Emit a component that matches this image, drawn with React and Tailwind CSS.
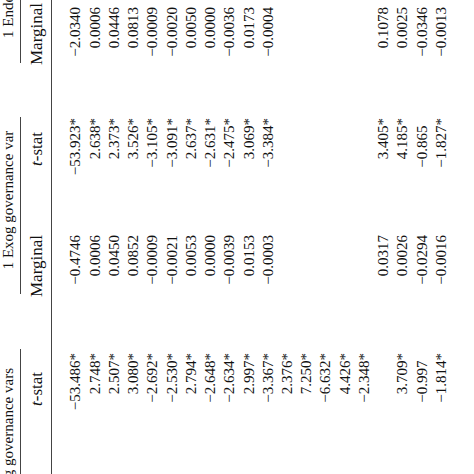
import React from "react";

const rows = [
  ["−53.486*", "−0.4746", "−53.923*", "−2.0340"],
  ["2.748*", "0.0006", "2.638*", "0.0006"],
  ["2.507*", "0.0450", "2.373*", "0.0446"],
  ["3.080*", "0.0852", "3.526*", "0.0813"],
  ["−2.692*", "−0.0009", "−3.105*", "−0.0009"],
  ["−2.530*", "−0.0021", "−3.091*", "−0.0020"],
  ["2.794*", "0.0053", "2.637*", "0.0050"],
  ["−2.648*", "0.0000", "−2.631*", "0.0000"],
  ["−2.634*", "−0.0039", "−2.475*", "−0.0036"],
  ["2.997*", "0.0153", "3.069*", "0.0173"],
  ["−3.367*", "−0.0003", "−3.384*", "−0.0004"],
  ["2.376*", "", "", ""],
  ["7.250*", "", "", ""],
  ["−6.632*", "", "", ""],
  ["4.426*", "", "", ""],
  ["−2.348*", "", "", ""],
  ["", "0.0317", "3.405*", "0.1078"],
  ["3.709*", "0.0026", "4.185*", "0.0025"],
  ["−0.997", "−0.0294", "−0.865", "−0.0346"],
  ["−1.814*", "−0.0016", "−1.827*", "−0.0013"],
];

function Stat({ v }) {
  if (!v) return null;
  const star = v.endsWith("*");
  const num = star ? v.slice(0, -1) : v;
  return (
    <span className="whitespace-nowrap">
      {num}
      <span className={star ? "inline-block w-[7.5px]" : "inline-block w-[7.5px] invisible"}>*</span>
    </span>
  );
}

export default function App() {
  return (
    <div className="w-[474px] h-[474px] overflow-hidden bg-white">
      <div className="w-[474px] h-[474px] -rotate-90 bg-white text-[#111] font-['Liberation_Serif',serif]">
        {/* group headers */}
        <div className="flex h-[16px] leading-[16px] text-[15px] whitespace-nowrap">
          <div className="w-[106px] flex justify-end">
            <span>All exog governance vars</span>
          </div>
          <div className="w-[84px]" />
          <div className="w-[168px] flex justify-center">
            <span>1 Exog governance var</span>
          </div>
          <div className="w-[78px]" />
          <div className="w-[38px] overflow-visible">
            <span>1 Endog governance var</span>
          </div>
        </div>
        <div className="h-[4px]" />
        {/* group rules */}
        <div className="flex h-px">
          <div className="w-[125px] bg-[#444]" />
          <div className="w-[55px]" />
          <div className="w-[177px] bg-[#444]" />
          <div className="w-[54px]" />
          <div className="w-[63px] bg-[#444]" />
        </div>
        <div className="h-[6px]" />
        {/* sub headers */}
        <div className="flex h-[20px] leading-[20px] text-[17px] whitespace-nowrap">
          <div className="w-[57px]" />
          <div className="w-[68px] flex justify-end pr-[23px]">
            <span><i>t</i>-stat</span>
          </div>
          <div className="w-[50px]" />
          <div className="w-[66px] flex justify-end pr-[2px]">
            <span>Marginal</span>
          </div>
          <div className="w-[56px]" />
          <div className="w-[61px] flex justify-end pr-[16px]">
            <span><i>t</i>-stat</span>
          </div>
          <div className="w-[49px]" />
          <div className="w-[67px] flex justify-end pr-[3px]">
            <span>Marginal</span>
          </div>
        </div>
        <div className="h-[4px]" />
        <div className="h-px bg-[#444]" />
        <div className="h-[14.4px]" />
        {/* data */}
        <div className="flex flex-col text-[15px]">
          {rows.map((r, i) => (
            <div key={i} className="flex h-[19.24px] leading-[19.24px]">
              <div className="w-[57px]" />
              <div className="w-[68px] flex justify-end pr-[4px]">
                <Stat v={r[0]} />
              </div>
              <div className="w-[50px]" />
              <div className="w-[66px] flex justify-end pr-[2px] whitespace-nowrap">
                {r[1]}
              </div>
              <div className="w-[56px]" />
              <div className="w-[61px] flex justify-end pr-[2px]">
                <Stat v={r[2]} />
              </div>
              <div className="w-[49px]" />
              <div className="w-[67px] flex justify-end pr-[7px] whitespace-nowrap">
                {r[3]}
              </div>
            </div>
          ))}
        </div>
      </div>
    </div>
  );
}
